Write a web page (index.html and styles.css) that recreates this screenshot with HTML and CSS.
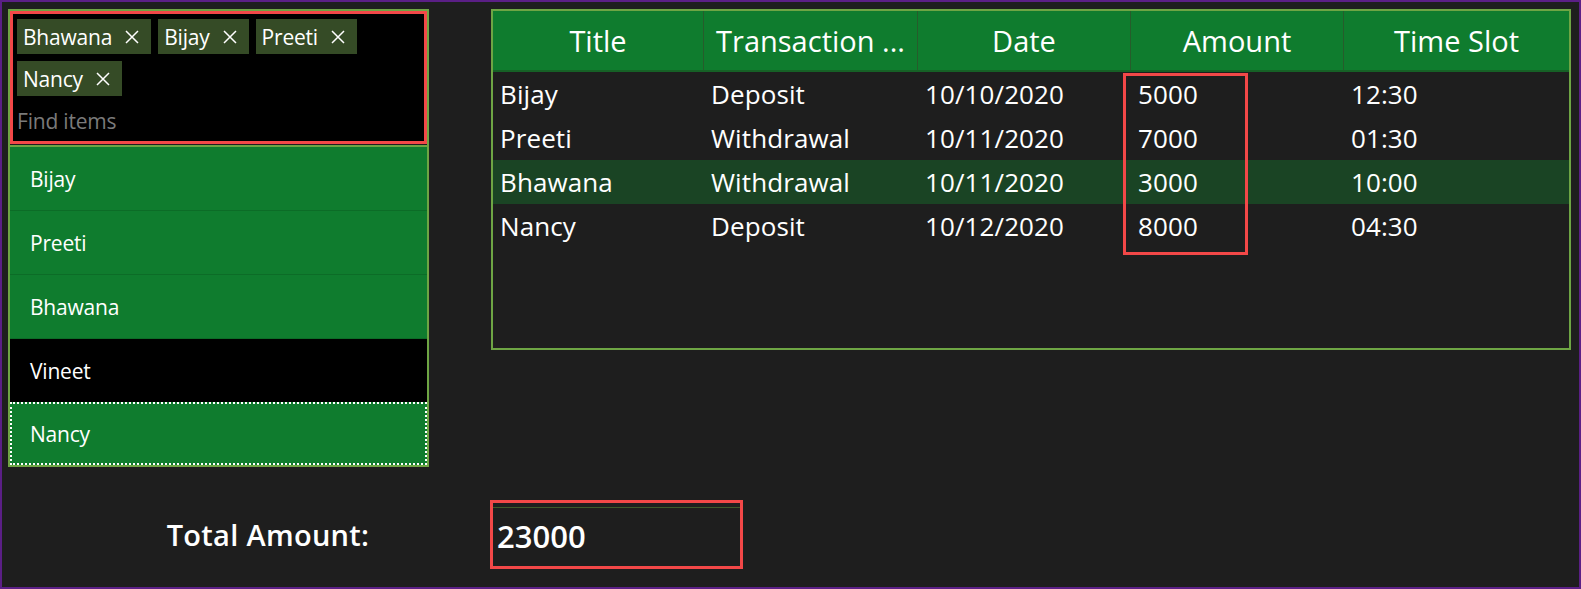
FILE: index.html
```html
<!DOCTYPE html>
<html>
<head>
<meta charset="utf-8">
<link rel="stylesheet" href="styles.css">
</head>
<body>
<div class="frame">
  <div class="top">
    <div class="picker">
      <div class="combo">
        <div class="tags">
          <span class="tag">Bhawana<svg class="x" viewBox="0 0 14 14"><path d="M1 1L13 13M13 1L1 13"/></svg></span>
          <span class="tag">Bijay<svg class="x" viewBox="0 0 14 14"><path d="M1 1L13 13M13 1L1 13"/></svg></span>
          <span class="tag">Preeti<svg class="x" viewBox="0 0 14 14"><path d="M1 1L13 13M13 1L1 13"/></svg></span>
          <span class="tag">Nancy<svg class="x" viewBox="0 0 14 14"><path d="M1 1L13 13M13 1L1 13"/></svg></span>
        </div>
        <div class="find">Find items</div>
      </div>
      <ul class="list">
        <li class="item sel">Bijay</li>
        <li class="item sel">Preeti</li>
        <li class="item sel">Bhawana</li>
        <li class="item short">Vineet</li>
        <li class="item sel short focus">Nancy</li>
      </ul>
    </div>
    <div class="grid-wrap">
      <div class="grid">
        <div class="row head">
          <div class="cell">Title</div>
          <div class="cell">Transaction ...</div>
          <div class="cell">Date</div>
          <div class="cell">Amount</div>
          <div class="cell">Time Slot</div>
        </div>
        <div class="row">
          <div class="cell">Bijay</div><div class="cell">Deposit</div><div class="cell">10/10/2020</div><div class="cell">5000</div><div class="cell">12:30</div>
        </div>
        <div class="row">
          <div class="cell">Preeti</div><div class="cell">Withdrawal</div><div class="cell">10/11/2020</div><div class="cell">7000</div><div class="cell">01:30</div>
        </div>
        <div class="row hl">
          <div class="cell">Bhawana</div><div class="cell">Withdrawal</div><div class="cell">10/11/2020</div><div class="cell">3000</div><div class="cell">10:00</div>
        </div>
        <div class="row">
          <div class="cell">Nancy</div><div class="cell">Deposit</div><div class="cell">10/12/2020</div><div class="cell">8000</div><div class="cell">04:30</div>
        </div>
      </div>
      <div class="amount-mark"></div>
    </div>
  </div>
  <div class="bottom">
    <div class="total-label">Total Amount:</div>
    <div class="total-box"><div class="total-input">23000</div></div>
  </div>
</div>
</body>
</html>
```

FILE: styles.css
```css
* { box-sizing: border-box; }
html, body { margin: 0; padding: 0; overflow: hidden; }
body {
  background: #1e1e1e;
  font-family: "Open Sans", "Noto Sans", sans-serif;
  color: #fff;
}
.frame {
  width: 1581px;
  height: 589px;
  border: 2px solid #5b1f86;
  background: #1e1e1e;
  padding: 7px 0 0 6px;
  display: flex;
  flex-direction: column;
  overflow: hidden;
}
.top {
  display: flex;
  align-items: flex-start;
}
.picker {
  width: 421px;
  border: 2px solid #6ea544;
  background: #1e1e1e;
  flex: none;
}
.combo {
  height: 133px;
  border: 3px solid #f24848;
  background: #000;
  padding: 5px 4px 0 4px;
  display: flex;
  flex-direction: column;
}
.tags {
  display: flex;
  flex-wrap: wrap;
  gap: 7px 7px;
  width: 360px;
}
.tag {
  height: 35px;
  background: #354b26;
  color: #fff;
  font-size: 21px;
  display: flex;
  align-items: center;
  padding: 0 12px 0 6px;
  gap: 13px;
  letter-spacing: -0.2px;
}
.x {
  width: 14px;
  height: 14px;
  stroke: #fff;
  stroke-width: 1.5;
  fill: none;
}
.find {
  color: #7a7a7a;
  font-size: 21px;
  margin-top: 11px;
  letter-spacing: -0.2px;
}
.list {
  list-style: none;
  margin: 1px 0 0 0;
  padding: 0;
  border-top: 2px solid #6ea544;
}
.item {
  height: 64px;
  display: flex;
  align-items: center;
  padding-left: 20px;
  font-size: 21px;
  background: #000;
  letter-spacing: -0.2px;
}
.item.short { height: 63px; }
.item.sel {
  background: #0f7c2e;
  border-bottom: 1px solid #0c6c27;
}
.item.focus {
  border: 2px dotted #fff;
  padding-left: 18px;
}
.grid-wrap {
  position: relative;
  margin-left: 62px;
  flex: none;
}
.grid {
  width: 1080px;
  height: 341px;
  border: 2px solid #6ea544;
  background: #1e1e1e;
}
.row {
  display: grid;
  grid-template-columns: 211px 214px 213px 213px 225px;
  height: 44px;
  align-items: center;
  font-size: 26px;
}
.row .cell {
  padding-left: 7px;
  white-space: nowrap;
  letter-spacing: 0.1px;
}
.row.head {
  height: 61px;
  background: #0f7c2e;
  border-bottom: 2px solid #166126;
  font-size: 29px;
  align-items: stretch;
}
.row.head .cell {
  display: flex;
  align-items: center;
  justify-content: center;
  padding-left: 0;
  letter-spacing: 0;
  border-right: 1px solid #265c2b;
}
.row.head .cell:last-child { border-right: none; }
.row.hl { background: #1a4424; }
.amount-mark {
  position: absolute;
  left: 632px;
  top: 64px;
  width: 125px;
  height: 182px;
  border: 3px solid #f24848;
}
.bottom {
  display: flex;
  align-items: center;
  margin-top: 33px;
}
.total-label {
  width: 482px;
  flex: none;
  text-align: center;
  font-weight: 600;
  font-size: 29px;
  letter-spacing: 0.3px;
  padding-left: 38px;
}
.total-box {
  width: 253px;
  height: 69px;
  border: 3px solid #f24848;
  padding-top: 4px;
  flex: none;
}
.total-input {
  height: 100%;
  border-top: 1px solid #3d5a2a;
  font-weight: 600;
  font-size: 31px;
  padding-left: 4px;
  padding-bottom: 3px;
  display: flex;
  align-items: center;
}
```
